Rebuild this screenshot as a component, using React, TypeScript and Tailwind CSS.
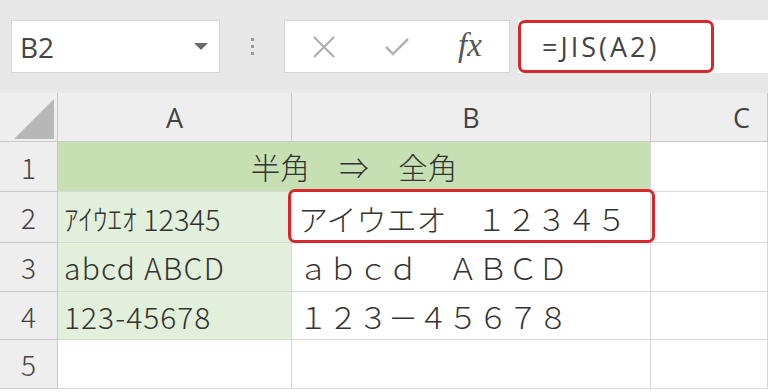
import React from "react";

const jp = { fontFamily: '"Noto Sans CJK JP", "Noto Sans", sans-serif' };
const ui = { fontFamily: '"Open Sans", "Noto Sans", sans-serif' };

function Cell({
  children,
  className = "",
}: {
  children?: React.ReactNode;
  className?: string;
}) {
  return (
    <div
      className={
        "flex items-center border-r border-b border-[#d9d9d9] font-light text-[#333] leading-none " +
        className
      }
      style={jp}
    >
      {children}
    </div>
  );
}

function RowHead({ n }: { n: number }) {
  return (
    <div
      className="flex w-[58px] shrink-0 items-center justify-center border-r border-b border-[#c8c8c8] bg-[#eeeeee] text-[28px] font-light text-[#444] leading-none"
      style={jp}
    >
      {n}
    </div>
  );
}

export default function App() {
  const rowH = ["h-[50px]", "h-[51px]", "h-[49px]", "h-[48px]", "h-[49px]"];
  return (
    <div className="relative h-[392px] w-[768px] overflow-hidden bg-white">
      {/* formula bar */}
      <div className="flex h-[93px] items-start bg-[#e7e7e7] pt-[20px]">
        <div className="ml-[11px] flex h-[53px] w-[209px] items-center justify-between border border-[#d6d6d6] bg-white pl-[8px] pr-[11px]">
          <span className="text-[28px] text-[#444] leading-none" style={ui}>
            B2
          </span>
          <svg width="14" height="8" viewBox="0 0 14 8">
            <polygon points="0,0 14,0 7,7" fill="#6b6b6b" />
          </svg>
        </div>
        <div className="flex h-[53px] w-[64px] flex-col items-center justify-center gap-[4px]">
          <div className="h-[3px] w-[3px] bg-[#9a9a9a]" />
          <div className="h-[3px] w-[3px] bg-[#9a9a9a]" />
          <div className="h-[3px] w-[3px] bg-[#9a9a9a]" />
        </div>
        <div className="flex h-[53px] w-[226px] items-center border border-[#d6d6d6] bg-white">
          <div className="flex w-[76px] justify-center pl-[2px]">
            <svg width="24" height="22" viewBox="0 0 24 22">
              <path d="M2 1 L22 21 M22 1 L2 21" stroke="#adadad" strokeWidth="2" fill="none" />
            </svg>
          </div>
          <div className="flex w-[72px] justify-center">
            <svg width="26" height="20" viewBox="0 0 26 20">
              <path d="M2 10 L9 17 L24 2" stroke="#b4b4b4" strokeWidth="2.5" fill="none" />
            </svg>
          </div>
          <div
            className="flex w-[72px] justify-center pl-[2px] pb-[2px] text-[33px] italic text-[#555] leading-none"
            style={{ fontFamily: '"Liberation Serif", "DejaVu Serif", serif' }}
          >
            fx
          </div>
        </div>
        <div className="ml-[8px] flex h-[53px] flex-1 bg-white">
          <div className="flex h-[53px] w-[196px] items-center rounded-[7px] border-[3px] border-[#d8262d] pl-[21px]">
            <span className="text-[27px] tracking-[3px] text-[#444] leading-none" style={ui}>
              =JIS(A2)
            </span>
          </div>
        </div>
      </div>

      {/* column header */}
      <div className="flex h-[49px]">
        <div className="flex w-[58px] shrink-0 items-end justify-end border-r border-b border-[#c8c8c8] bg-[#eeeeee] pb-[2px] pr-[3px]">
          <svg width="40" height="40" viewBox="0 0 40 40">
            <polygon points="0,40 40,0 40,40" fill="#b7b7b7" />
          </svg>
        </div>
        {[
          ["A", "w-[234px]"],
          ["B", "w-[359px]"],
          ["C", "flex-1 justify-start pl-[82px]"],
        ].map(([l, w]) => (
          <div
            key={l}
            className={
              "flex items-center justify-center border-r border-b border-[#c8c8c8] bg-[#eeeeee] text-[27px] text-[#444] leading-none " +
              w
            }
            style={ui}
          >
            {l}
          </div>
        ))}
      </div>

      {/* rows */}
      <div className={"flex " + rowH[0]}>
        <RowHead n={1} />
        <Cell className="w-[593px] justify-center bg-[#c6e0b4] text-[29.5px]">半角　⇒　全角</Cell>
        <Cell className="flex-1" />
      </div>
      <div className={"flex " + rowH[1]}>
        <RowHead n={2} />
        <Cell className="w-[234px] bg-[#e2efda] pl-[6px] pt-[2px] text-[29px]">ｱｲｳｴｵ 12345</Cell>
        <Cell className="w-[359px] pl-[6px] pt-[2px] text-[30px]">アイウエオ　１２３４５</Cell>
        <Cell className="flex-1" />
      </div>
      <div className={"flex " + rowH[2]}>
        <RowHead n={3} />
        <Cell className="w-[234px] bg-[#e2efda] pl-[6px] text-[30px] tracking-[1.3px]">abcd ABCD</Cell>
        <Cell className="w-[359px] pl-[6px] text-[30px]">ａｂｃｄ　ＡＢＣＤ</Cell>
        <Cell className="flex-1" />
      </div>
      <div className={"flex " + rowH[3]}>
        <RowHead n={4} />
        <Cell className="w-[234px] bg-[#e2efda] pl-[6px] text-[30px] tracking-[1px]">123-45678</Cell>
        <Cell className="w-[359px] pl-[6px] text-[30px]">１２３－４５６７８</Cell>
        <Cell className="flex-1" />
      </div>
      <div className={"flex " + rowH[4]}>
        <RowHead n={5} />
        <Cell className="w-[234px]" />
        <Cell className="w-[359px]" />
        <Cell className="flex-1" />
      </div>

      {/* highlight around B2 */}
      <div className="pointer-events-none absolute left-[288px] top-[189px] h-[54px] w-[367px] rounded-[7px] border-[3px] border-[#d8262d]" />
    </div>
  );
}
